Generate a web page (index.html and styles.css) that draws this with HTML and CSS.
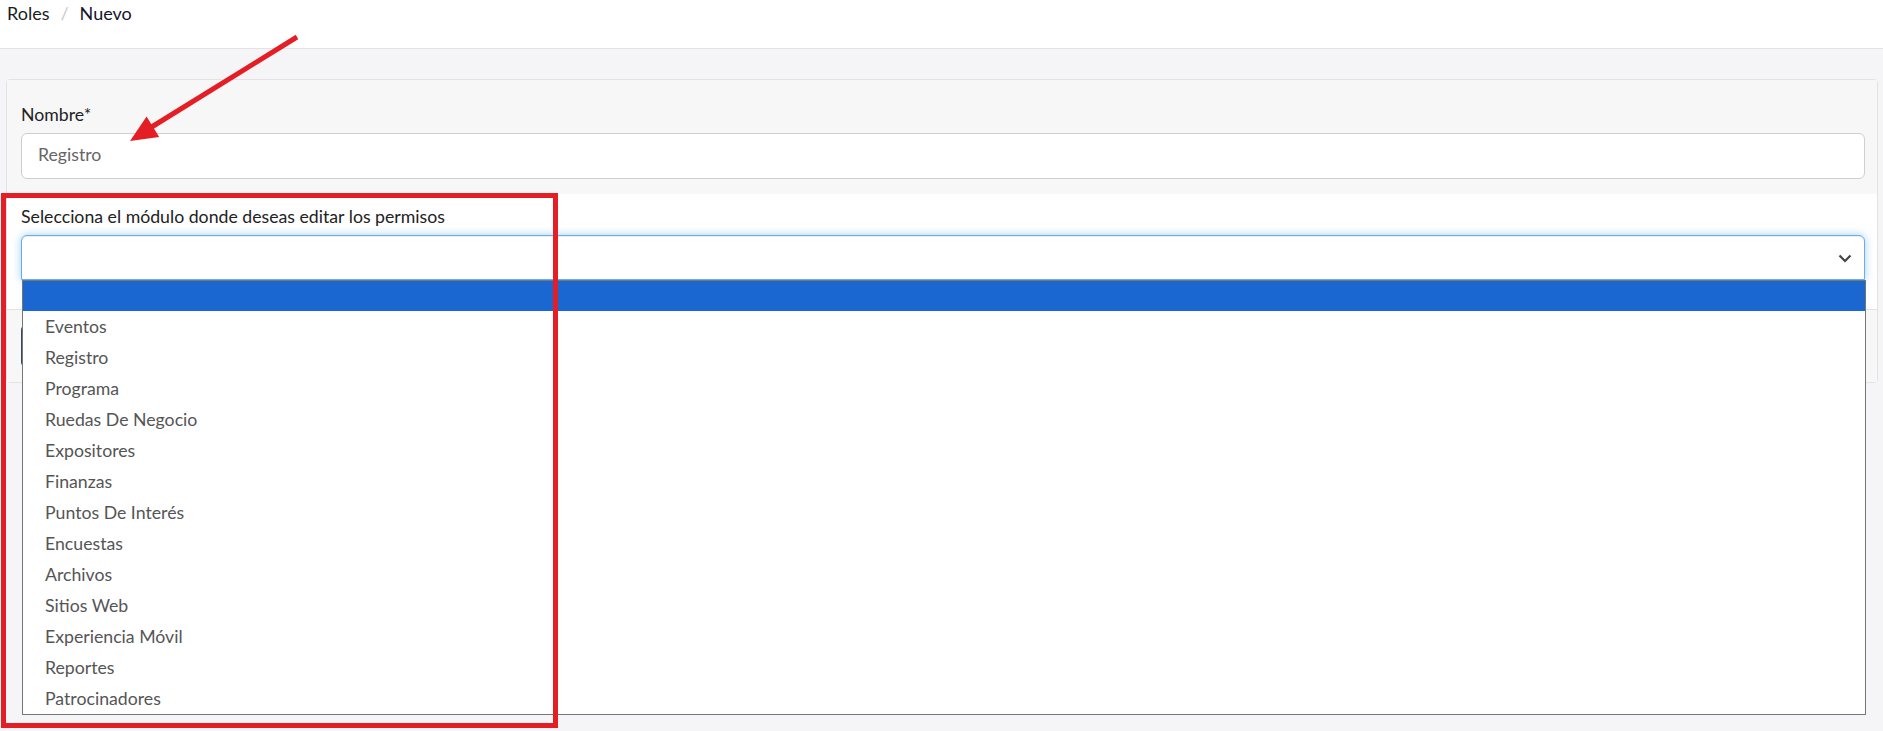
FILE: index.html
```html
<!DOCTYPE html>
<html lang="es">
<head>
<meta charset="utf-8">
<title>Roles / Nuevo</title>
<link rel="stylesheet" href="styles.css">
</head>
<body>
<header class="topbar">
  <nav class="breadcrumb">
    <span class="crumb">Roles</span>
    <span class="sep">/</span>
    <span class="crumb current">Nuevo</span>
  </nav>
</header>

<main class="content">
  <section class="card">
    <div class="card-section gray">
      <label class="label">Nombre*</label>
      <div class="input">Registro</div>
    </div>
    <div class="card-section white">
      <label class="label">Selecciona el módulo donde deseas editar los permisos</label>
      <div class="select-wrap">
        <div class="select focused">
          <svg class="chevron" width="14" height="9" viewBox="0 0 14 9"><path d="M1.5 1.5 L7 7 L12.5 1.5" fill="none" stroke="#444" stroke-width="2.2"/></svg>
        </div>
        <ul class="options">
          <li class="opt selected">&nbsp;</li>
          <li class="opt">Eventos</li>
          <li class="opt">Registro</li>
          <li class="opt">Programa</li>
          <li class="opt">Ruedas De Negocio</li>
          <li class="opt">Expositores</li>
          <li class="opt">Finanzas</li>
          <li class="opt">Puntos De Interés</li>
          <li class="opt">Encuestas</li>
          <li class="opt">Archivos</li>
          <li class="opt">Sitios Web</li>
          <li class="opt">Experiencia Móvil</li>
          <li class="opt">Reportes</li>
          <li class="opt">Patrocinadores</li>
        </ul>
      </div>
    </div>
    <div class="card-footer">
      <button class="btn" aria-label="Guardar"></button>
    </div>
  </section>
</main>

<div class="annot-box"></div>
<svg class="annot-arrow" width="320" height="160" viewBox="0 0 320 160">
  <line x1="297" y1="37" x2="150" y2="128" stroke="#e41e25" stroke-width="5"/>
  <polygon points="130,141 146.6,116.5 159.2,136.9" fill="#e41e25"/>
</svg>
</body>
</html>
```

FILE: styles.css
```css
* { box-sizing: border-box; }

html, body {
  margin: 0;
  padding: 0;
}

body {
  background: #f5f5f7;
  font-family: Lato, "Open Sans", "Liberation Sans", sans-serif;
  font-size: 17.7px;
  line-height: 1.5;
  color: #222;
  width: 1883px;
  height: 731px;
  overflow: hidden;
  position: relative;
}

.topbar {
  background: #fff;
  height: 49px;
  border-bottom: 1px solid #e3e3e5;
  padding: 0 7px;
}

.breadcrumb {
  display: flex;
  align-items: baseline;
  font-size: 18px;
}

.crumb { color: #1b1b1f; }
.crumb.current { color: #14142b; }

.sep {
  color: #c8c8cc;
  padding: 0 11px 0 11px;
}

.content {
  padding: 30px 5px 0 6px;
}

.card {
  border: 1px solid #e3e3e5;
  border-radius: 4px;
  background: #f7f7f8;
}

.card-section {
  padding: 0 12px 0 14px;
}

.card-section.gray {
  background: #f7f7f8;
  padding-top: 22px;
  padding-bottom: 15px;
}

.card-section.white {
  background: #fff;
  padding-top: 10px;
  padding-bottom: 29px;
}

.label {
  display: block;
  color: #222;
}

.card-section.gray .label { margin-bottom: 4px; }
.card-section.white .label { margin-bottom: 5px; }

.input {
  height: 46px;
  border: 1px solid #cfcfd3;
  border-radius: 6px;
  background: #fff;
  padding: 0 16px;
  display: flex;
  align-items: center;
  color: #666;
}

.select-wrap {
  position: relative;
}

.select {
  height: 45px;
  border: 1px solid #66afe9;
  border-radius: 6px 6px 0 0;
  background: #fff;
  box-shadow: inset 0 1px 1px rgba(0,0,0,.075), 0 0 8px rgba(102,175,233,.6);
  display: flex;
  align-items: center;
  justify-content: flex-end;
  padding-right: 12px;
}

.chevron { display: block; margin-top: 2px; }

.options {
  position: absolute;
  top: 100%;
  left: 1px;
  right: -1px;
  margin: 0;
  padding: 0;
  list-style: none;
  background: #fff;
  border: 1px solid #767676;
  z-index: 5;
}

.opt {
  height: 31px;
  line-height: 31px;
  padding-left: 22px;
  color: #555;
}

.opt.selected {
  background: #1a67d2;
  height: 30px;
}

.card-footer {
  border-top: 1px solid #e3e3e5;
  background: #f7f7f8;
  height: 73px;
  padding: 16px 14px;
}

.btn {
  display: block;
  height: 40px;
  width: 110px;
  border: none;
  border-radius: 4px;
  background: #34495e;
}

.annot-box {
  position: absolute;
  left: 1px;
  top: 193px;
  width: 557px;
  height: 535px;
  border: 5px solid #e41e25;
  z-index: 10;
}

.annot-arrow {
  position: absolute;
  left: 0;
  top: 0;
  z-index: 10;
}
```
